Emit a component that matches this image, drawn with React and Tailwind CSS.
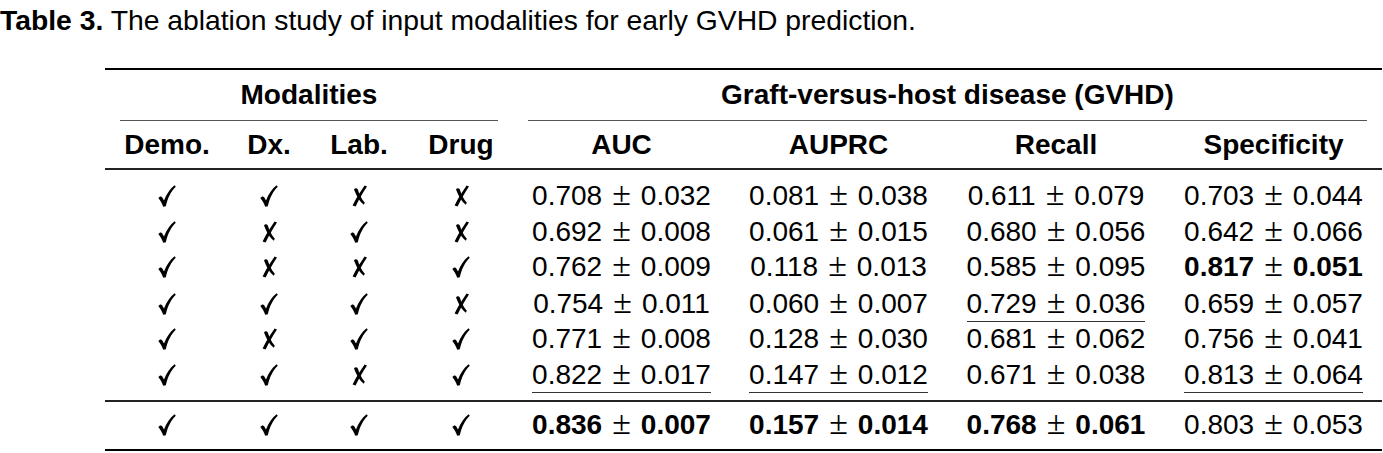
const cols = "grid grid-cols-[124px_80px_100px_104px_217px_217px_218px_217px]";

const rows = [
  { m: [1, 1, 0, 0], v: [["0.708", "0.032"], ["0.081", "0.038"], ["0.611", "0.079"], ["0.703", "0.044"]] },
  { m: [1, 0, 1, 0], v: [["0.692", "0.008"], ["0.061", "0.015"], ["0.680", "0.056"], ["0.642", "0.066"]] },
  { m: [1, 0, 0, 1], v: [["0.762", "0.009"], ["0.118", "0.013"], ["0.585", "0.095"], ["0.817", "0.051", "b"]] },
  { m: [1, 1, 1, 0], v: [["0.754", "0.011"], ["0.060", "0.007"], ["0.729", "0.036", "u"], ["0.659", "0.057"]] },
  { m: [1, 0, 1, 1], v: [["0.771", "0.008"], ["0.128", "0.030"], ["0.681", "0.062"], ["0.756", "0.041"]] },
  { m: [1, 1, 0, 1], v: [["0.822", "0.017", "u"], ["0.147", "0.012", "u"], ["0.671", "0.038"], ["0.813", "0.064", "u"]] },
];

const best = { m: [1, 1, 1, 1], v: [["0.836", "0.007", "b"], ["0.157", "0.014", "b"], ["0.768", "0.061", "b"], ["0.803", "0.053"]] };

// pifont-style check / cross
const Check = () => (
  <svg viewBox="0 0 18 22" className="w-[18px] h-[22px]">
    <path
      d="M0.3 13 C1.5 11.4 3 11 4 12 L6 15.4 C8.4 9.4 11.8 4 16.6 0.3 L17.8 1.8 C13 6.4 10 12.4 7.8 21.2 L5.2 21.8 C4 18.2 2.4 15.4 0.3 13 Z"
      fill="black"
    />
  </svg>
);

const Cross = () => (
  <svg viewBox="0 0 15 22" className="w-[15px] h-[22px]">
    <path d="M12.6 0.4 L15 1.6 C10.8 8 7 14.4 3.6 21.4 L0.6 20.4 C4 13.4 8 7 12.6 0.4 Z" fill="black" />
    <path d="M2 4.4 C3 2.8 4.6 2.8 5.6 4 C7.4 9.2 9 13.6 12.8 17.8 L11.8 19.8 C7.6 16.4 4.6 11.2 2 4.4 Z" fill="black" />
  </svg>
);

const Mark = ({ on }) => (
  <div className="flex items-center justify-center">{on ? <Check /> : <Cross />}</div>
);

const Value = ({ cell }) => {
  const [a, b, f] = cell;
  return (
    <div className="flex items-center justify-center">
      <span
        className={
          f === "u"
            ? "inline-block pt-[2.5px] pb-[1px] border-b-[1.5px] border-[#333]"
            : "inline-block"
        }
      >
        <span className={f === "b" ? "font-bold" : ""}>{a}</span>
        <span className="font-['Liberation_Serif',serif] text-[34px] leading-[0] px-[10px]">±</span>
        <span className={f === "b" ? "font-bold" : ""}>{b}</span>
      </span>
    </div>
  );
};

const Row = ({ r, h }) => (
  <div className={cols + " " + h}>
    {r.m.map((on, i) => (
      <Mark key={i} on={on} />
    ))}
    {r.v.map((c, i) => (
      <Value key={i} cell={c} />
    ))}
  </div>
);

export default function App() {
  return (
    <div className="w-[1383px] h-[453px] bg-white text-black font-['Liberation_Sans',Arial,sans-serif] overflow-hidden">
      {/* caption */}
      <div className="h-[68px] pt-[4px] text-[28.3px] leading-[32px]">
        <span className="font-bold">Table 3.</span> The ablation study of input modalities for early GVHD prediction.
      </div>

      <div className="ml-[105px] w-[1277px] text-[28px] leading-[32px]">
        <div className="h-[2px] bg-black" />

        {/* group header */}
        <div className="grid grid-cols-[408px_869px] h-[51px]">
          <div className="flex flex-col">
            <div className="flex-1 flex items-center justify-center font-bold">Modalities</div>
            <div className="h-px bg-[#555] mx-[15px]" />
          </div>
          <div className="flex flex-col">
            <div className="flex-1 flex items-center justify-center font-bold">Graft-versus-host disease (GVHD)</div>
            <div className="h-px bg-[#555] mx-[15px]" />
          </div>
        </div>

        {/* column header */}
        <div className={cols + " h-[47px] font-bold"}>
          {["Demo.", "Dx.", "Lab.", "Drug", "AUC", "AUPRC", "Recall", "Specificity"].map((t) => (
            <div key={t} className="flex items-center justify-center">
              {t}
            </div>
          ))}
        </div>
        <div className="h-[1.5px] bg-[#222]" />

        <div className="pt-[9px] pb-[8px]">
          {rows.map((r, i) => (
            <Row key={i} r={r} h="h-[35.6px]" />
          ))}
        </div>
        <div className="h-[1.5px] bg-[#222]" />

        <Row r={best} h="h-[47px]" />
        <div className="h-[2px] bg-black" />
      </div>
    </div>
  );
}
